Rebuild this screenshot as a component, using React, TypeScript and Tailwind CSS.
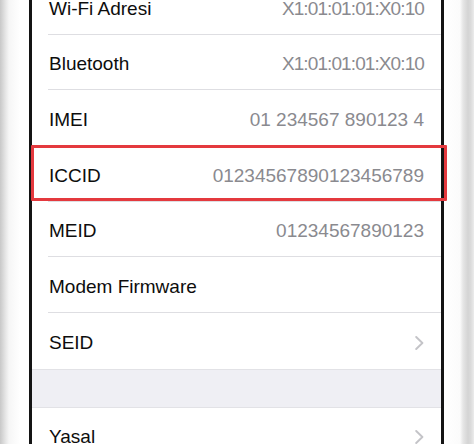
import React from "react";

function Chevron() {
  return (
    <svg width="9" height="14" viewBox="0 0 9 14" fill="none">
      <path d="M1.2 1 L7.4 7 L1.2 13" stroke="#c4c4c8" strokeWidth="1.9" strokeLinecap="round" strokeLinejoin="round" />
    </svg>
  );
}

type RowProps = {
  label: string;
  value?: string;
  chevron?: boolean;
  tight?: boolean;
  last?: boolean;
};

function Row({ label, value, chevron, tight, last }: RowProps) {
  return (
    <div
      className={
        "ml-[16px] h-[55.67px] flex items-center justify-between pl-px pr-[17px] pt-[5px] " +
        (last ? "" : "border-b border-[#dedee2]")
      }
    >
      <span className="text-[#0d0d0d]">{label}</span>
      {value && (
        <span className={"text-[#8a8a8f] " + (tight ? "tracking-[-0.9px]" : "")}>{value}</span>
      )}
      {chevron && <Chevron />}
    </div>
  );
}

export default function App() {
  return (
    <div className="w-[474px] h-[444px] overflow-hidden bg-white flex font-['Liberation_Sans',Arial,sans-serif] text-[19px] leading-normal">
      <div className="w-[29px] h-full bg-[linear-gradient(to_right,#c8c8c8_0px,#d8d8d8_3px,#e8e8e8_6px,#f6f6f6_9px,#ffffff_20px,#ffffff_29px)]" />
      <div className="w-[3px] h-full bg-[#141414]" />
      <div className="flex-1 h-full bg-white flex flex-col relative">
        <div className="-mt-[21px] flex flex-col">
          <Row label="Wi-Fi Adresi" value="X1:01:01:01:X0:10" tight />
          <Row label="Bluetooth" value="X1:01:01:01:X0:10" tight />
          <Row label="IMEI" value="01 234567 890123 4" />
          <div className="relative">
            <Row label="ICCID" value="01234567890123456789" />
            <div className="absolute z-10 -top-[1px] bottom-[1px] -left-[1px] -right-[6px] border-[3.5px] border-[#e4393e] rounded-[1px] pointer-events-none" />
          </div>
          <Row label="MEID" value="01234567890123" />
          <Row label="Modem Firmware" />
          <Row label="SEID" chevron last />
          <div className="h-[39px] bg-[#efeff4] border-y border-[#e2e2e6]" />
          <Row label="Yasal" chevron />
        </div>
      </div>
      <div className="w-[3px] h-full bg-[#141414]" />
      <div className="w-[30px] h-full bg-[linear-gradient(to_right,#ffffff_0px,#fbfbfb_16px,#e6e6e6_19px,#d4d4d4_24px,#dcdcdc_27px,#ececec_30px)]" />
    </div>
  );
}
